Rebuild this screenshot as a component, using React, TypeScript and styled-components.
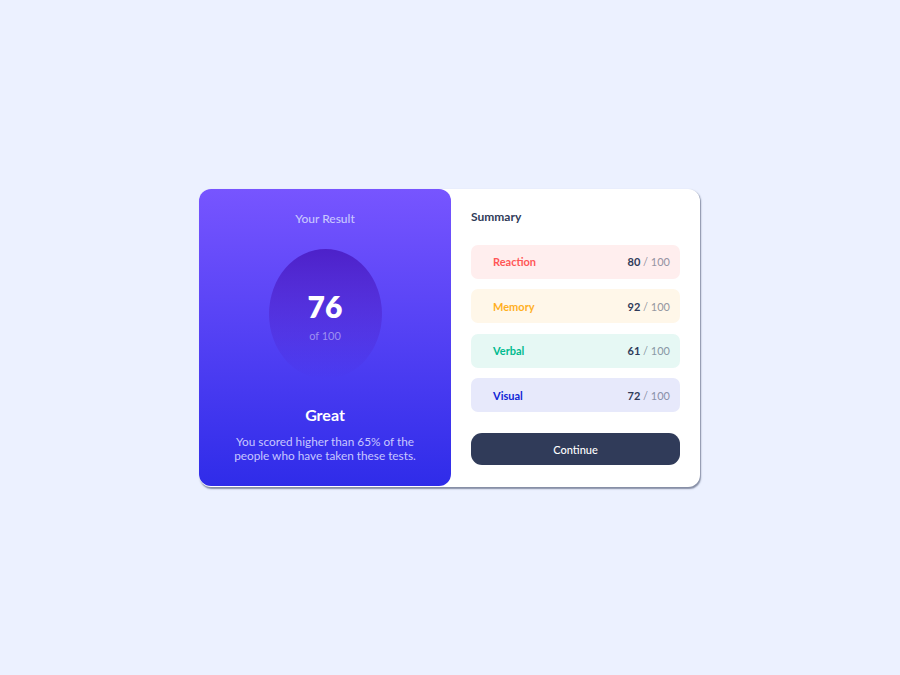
import React from "react";
import { styled, createGlobalStyle } from "styled-components";

const GlobalStyle = createGlobalStyle`
  * { box-sizing: border-box; }
  body {
    margin: 0;
    background: #ecf1ff;
    font-family: "Lato", "Noto Sans", sans-serif;
  }
`;

const Page = styled.main`
  min-height: 100vh;
  display: flex;
  align-items: center;
  justify-content: center;
  padding-right: 1px;
`;

const Card = styled.section`
  display: flex;
  width: 501px;
  height: 298px;
  background: #fff;
  border-radius: 12px;
  box-shadow: 1px 1.5px 1.5px rgba(48, 59, 89, 0.55);
`;

const ResultPanel = styled.div`
  width: 252px;
  height: 297px;
  display: flex;
  flex-direction: column;
  align-items: center;
  padding-top: 22px;
  border-radius: 12px;
  background: linear-gradient(180deg, #7755ff 0%, #2f2ce9 100%);
  color: #fff;
  text-align: center;
`;

const ResultTitle = styled.h2`
  margin: 0;
  font-size: 12px;
  line-height: 16px;
  font-weight: 500;
  color: #c8c7ff;
`;

const ScoreCircle = styled.div`
  margin-top: 22px;
  width: 113px;
  height: 130px;
  border-radius: 50%;
  display: flex;
  flex-direction: column;
  align-items: center;
  justify-content: center;
  padding-top: 5px;
  background: linear-gradient(
    180deg,
    rgba(77, 33, 201, 1) 0%,
    rgba(37, 33, 201, 0) 100%
  );
`;

const ScoreValue = styled.span`
  font-size: 30px;
  line-height: 34px;
  font-weight: 800;
  color: #fff;
`;

const ScoreMax = styled.span`
  margin-top: 6px;
  font-size: 11px;
  line-height: 14px;
  color: rgba(255, 255, 255, 0.45);
`;

const Verdict = styled.h3`
  margin: 26px 0 0;
  font-size: 16px;
  line-height: 20px;
  font-weight: 700;
`;

const Description = styled.p`
  margin: 10px 0 0;
  max-width: 186px;
  font-size: 11.8px;
  line-height: 14px;
  color: #c8c7ff;
`;

const SummaryPanel = styled.div`
  flex: 1;
  display: flex;
  flex-direction: column;
  padding: 20px 20px 0;
`;

const SummaryTitle = styled.h2`
  margin: 0;
  font-size: 12px;
  line-height: 16px;
  font-weight: 700;
  color: #303b59;
`;

const List = styled.ul`
  list-style: none;
  margin: 20px 0 0;
  padding: 0;
  display: flex;
  flex-direction: column;
  gap: 10.5px;
`;

const Row = styled.li<{ $tone: string; $bg: string }>`
  height: 34px;
  display: flex;
  align-items: center;
  justify-content: space-between;
  padding: 0 10px 0 22px;
  border-radius: 7px;
  background: ${(p) => p.$bg};
  color: ${(p) => p.$tone};
  font-size: 11px;
  font-weight: 700;
`;

const Score = styled.span`
  font-size: 11px;
  font-weight: 700;
  color: #303b59;
`;

const Total = styled.span`
  font-weight: 500;
  color: rgba(48, 59, 89, 0.5);
`;

const ContinueButton = styled.button`
  margin-top: 21px;
  height: 32px;
  border: none;
  border-radius: 11px;
  background: #303b59;
  color: #fff;
  font-family: inherit;
  font-size: 11px;
  font-weight: 500;
  cursor: pointer;
`;

const categories = [
  { name: "Reaction", score: 80, tone: "#ff5757", bg: "#ffeeee" },
  { name: "Memory", score: 92, tone: "#ffb01f", bg: "#fff7e9" },
  { name: "Verbal", score: 61, tone: "#00bb8f", bg: "#e6f8f4" },
  { name: "Visual", score: 72, tone: "#1125d6", bg: "#e7e9fb" },
];

export default function App() {
  return (
    <>
      <GlobalStyle />
      <Page>
        <Card>
          <ResultPanel>
            <ResultTitle>Your Result</ResultTitle>
            <ScoreCircle>
              <ScoreValue>76</ScoreValue>
              <ScoreMax>of 100</ScoreMax>
            </ScoreCircle>
            <Verdict>Great</Verdict>
            <Description>
              You scored higher than 65% of the people who have taken these
              tests.
            </Description>
          </ResultPanel>
          <SummaryPanel>
            <SummaryTitle>Summary</SummaryTitle>
            <List>
              {categories.map((c) => (
                <Row key={c.name} $tone={c.tone} $bg={c.bg}>
                  {c.name}
                  <Score>
                    {c.score} <Total>/ 100</Total>
                  </Score>
                </Row>
              ))}
            </List>
            <ContinueButton>Continue</ContinueButton>
          </SummaryPanel>
        </Card>
      </Page>
    </>
  );
}
